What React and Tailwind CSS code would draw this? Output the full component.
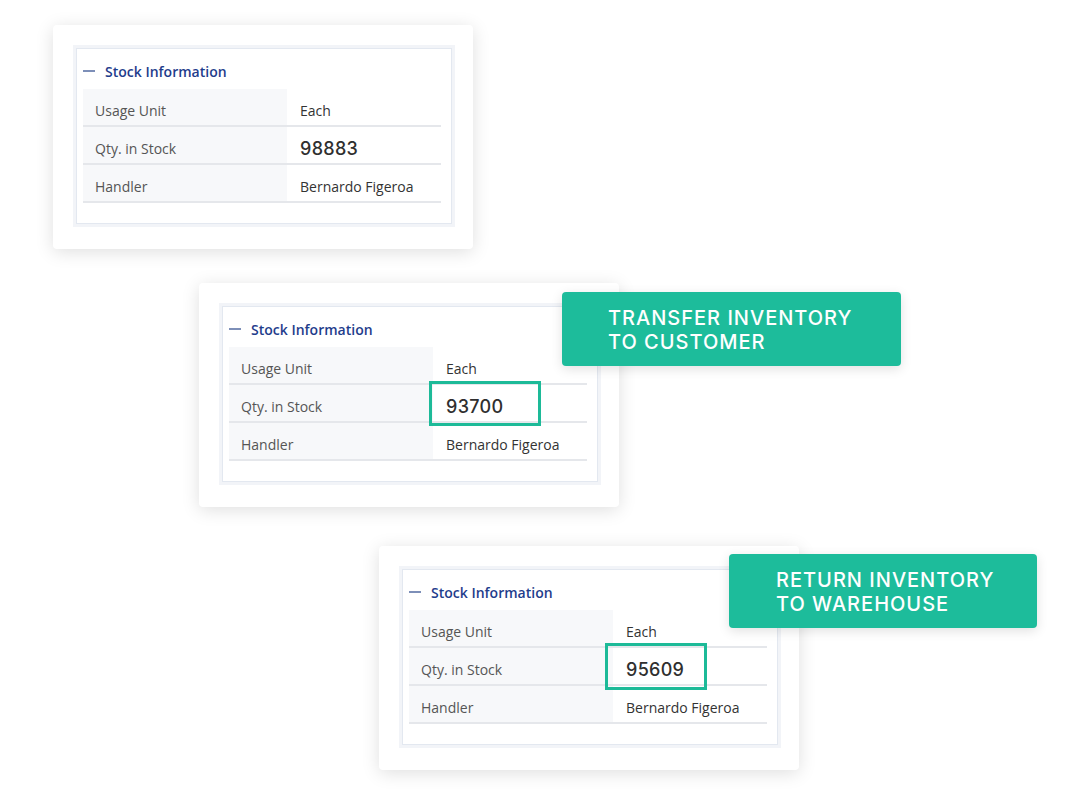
const rows = [
  { label: 'Usage Unit', value: 'Each' },
  { label: 'Qty. in Stock', value: null },
  { label: 'Handler', value: 'Bernardo Figeroa' },
]

function StockCard({ qty, highlight, boxClass }) {
  return (
    <div className="w-[420px] h-[224px] bg-white rounded-[4px] shadow-[0_3px_18px_rgba(0,0,0,0.13)] pt-5 pl-5 pr-[18px] pb-[22px]">
      <div className="h-full bg-[#f2f4f8] p-[3px]">
        <div className="h-full bg-white border border-[#e3e8f0] pl-[6px] pr-[10px]">
          <div className="flex items-center h-[40px] pt-[4px] text-[14px] font-semibold text-[#1f3d8c] font-['Open_Sans',sans-serif]">
            <span className="w-[12px] h-[1.5px] bg-[#7d8fb8] mr-[10px]" />
            Stock Information
          </div>
          <div className="font-['Open_Sans',sans-serif]">
            {rows.map((r) => (
              <div key={r.label} className="flex h-[38px] border-b-2 border-[#e5e7eb]">
                <div className="w-[204px] bg-[#f7f8fa] flex items-center pl-3 pt-[6px] text-[14px] text-[#555]">
                  {r.label}
                </div>
                <div className="relative flex-1 flex items-center pl-[13px] pt-[6px] text-[14px] text-[#333]">
                  {r.value === null ? (
                    <>
                      {highlight && (
                        <div className={`absolute border-[3px] border-[#1dba98] ${boxClass}`} />
                      )}
                      <span className="relative text-[18px] font-medium tracking-[0.3px] text-[#2f2f2f] font-['Inter',sans-serif]">
                        {qty}
                      </span>
                    </>
                  ) : (
                    r.value
                  )}
                </div>
              </div>
            ))}
          </div>
        </div>
      </div>
    </div>
  )
}

function Callout({ lines, className }) {
  return (
    <div
      className={`absolute bg-[#1dbc9b] rounded-[4px] shadow-[0_3px_12px_rgba(0,0,0,0.12)] text-white text-[20px] font-medium leading-[24px] tracking-[1px] uppercase font-['Inter',sans-serif] flex flex-col justify-center ${className}`}
    >
      {lines.map((l) => (
        <span key={l}>{l}</span>
      ))}
    </div>
  )
}

export default function App() {
  return (
    <div className="w-[1080px] h-[810px] bg-white pt-[25px] overflow-hidden">
      <div className="ml-[53px]">
        <StockCard qty="98883" />
      </div>

      <div className="relative ml-[199px] mt-[34px] w-[420px]">
        <StockCard qty="93700" highlight boxClass="-left-[4px] -top-[4px] w-[112px] h-[45px]" />
        <Callout
          lines={['Transfer Inventory', 'To Customer']}
          className="left-[363px] top-[9px] w-[339px] h-[74px] pl-[46px] pt-[1px]"
        />
      </div>

      <div className="relative ml-[379px] mt-[39px] w-[420px]">
        <StockCard qty="95609" highlight boxClass="-left-[8px] -top-[5px] w-[102px] h-[47px]" />
        <Callout
          lines={['Return Inventory', 'To Warehouse']}
          className="left-[350px] top-[8px] w-[308px] h-[74px] pl-[47px] pt-[1px]"
        />
      </div>
    </div>
  )
}
